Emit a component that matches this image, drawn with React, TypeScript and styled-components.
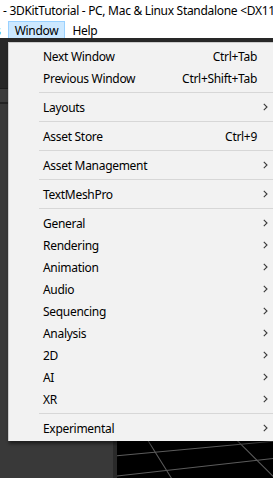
import React from 'react'
import styled, { createGlobalStyle } from 'styled-components'

const GlobalStyle = createGlobalStyle`
  html, body {
    margin: 0;
    padding: 0;
    width: 273px;
    height: 478px;
    overflow: hidden;
    background: #393939;
  }
  body {
    font-family: 'Noto Sans', 'Liberation Sans', sans-serif;
    font-size: 12px;
    letter-spacing: -0.3px;
    color: #000;
  }
`

type MenuEntry =
  | { kind: 'item'; label: string; shortcut?: string; submenu?: boolean }
  | { kind: 'separator' }

const item = (label: string, shortcut?: string): MenuEntry => ({ kind: 'item', label, shortcut })
const sub = (label: string): MenuEntry => ({ kind: 'item', label, submenu: true })
const sep: MenuEntry = { kind: 'separator' }

const WINDOW_MENU: MenuEntry[] = [
  item('Next Window', 'Ctrl+Tab'),
  item('Previous Window', 'Ctrl+Shift+Tab'),
  sep,
  sub('Layouts'),
  sep,
  item('Asset Store', 'Ctrl+9'),
  sep,
  sub('Asset Management'),
  sep,
  sub('TextMeshPro'),
  sep,
  sub('General'),
  sub('Rendering'),
  sub('Animation'),
  sub('Audio'),
  sub('Sequencing'),
  sub('Analysis'),
  sub('2D'),
  sub('AI'),
  sub('XR'),
  sep,
  sub('Experimental'),
]

// scene grid lines, in scene-view coordinates
const GRID_LINES = [
  [0, 348, 160, 333],
  [0, 368, 160, 350],
  [0, 300, 160, 288],
  [30, 332, 55, 372],
  [118, 332, 158, 372],
]

function Chevron() {
  return (
    <svg width="5" height="8" viewBox="0 0 5 8">
      <polyline points="0.8,0.8 4,4 0.8,7.2" fill="none" stroke="#3a3a3a" strokeWidth="1.1" />
    </svg>
  )
}

export default function App() {
  return (
    <>
      <GlobalStyle />
      <Page>
        <TitleBar>- 3DKitTutorial - PC, Mac &amp; Linux Standalone &lt;DX11&gt;</TitleBar>
        <MenuBar>
          <MenuBarItem $clipped>Tools</MenuBarItem>
          <MenuBarItem $open>Window</MenuBarItem>
          <MenuBarItem>Help</MenuBarItem>
        </MenuBar>
        <Workspace>
          <Toolbar />
          <TabStrip />
          <Panels>
            <HierarchyPanel />
            <Divider />
            <SceneView>
              <svg width="100%" height="100%" viewBox="0 0 156 370" preserveAspectRatio="xMinYMax slice">
                {GRID_LINES.map(([x1, y1, x2, y2], i) => (
                  <line key={i} x1={x1} y1={y1} x2={x2} y2={y2} stroke="#5c5c5c" strokeWidth="1" />
                ))}
              </svg>
            </SceneView>
          </Panels>
        </Workspace>

        <DropMenu>
          {WINDOW_MENU.map((entry, i) =>
            entry.kind === 'separator' ? (
              <Separator key={i} />
            ) : (
              <MenuRow key={i}>
                <Label>{entry.label}</Label>
                <Shortcut>{entry.shortcut}</Shortcut>
                <Arrow>{entry.submenu && <Chevron />}</Arrow>
              </MenuRow>
            ),
          )}
        </DropMenu>
      </Page>
    </>
  )
}

const Page = styled.div`
  position: relative;
  width: 273px;
  height: 478px;
  display: flex;
  flex-direction: column;
  overflow: hidden;
`

const TitleBar = styled.div`
  height: 22px;
  line-height: 22px;
  padding-left: 3px;
  background: #ffffff;
  white-space: nowrap;
  overflow: hidden;
`

const MenuBar = styled.div`
  height: 20px;
  display: flex;
  align-items: stretch;
  background: #ffffff;
  padding-top: 1px;
  box-sizing: border-box;
  white-space: nowrap;
  overflow: hidden;
`

const MenuBarItem = styled.div<{ $open?: boolean; $clipped?: boolean }>`
  display: flex;
  align-items: center;
  padding: 0 6px;
  height: 18px;
  border: 1px solid ${(p) => (p.$open ? '#99d1ff' : 'transparent')};
  background: ${(p) => (p.$open ? '#cce8ff' : 'transparent')};
  color: ${(p) => (p.$clipped ? '#2a8fd0' : '#000')};
  margin-left: ${(p) => (p.$clipped ? '-34px' : '0')};
`

const Workspace = styled.div`
  flex: 1;
  display: flex;
  flex-direction: column;
  background: #393939;
`

const Toolbar = styled.div`
  height: 50px;
  background: #282828;
  border-bottom: 1px solid #1e1e1e;
`

const TabStrip = styled.div`
  height: 13px;
  background: #3c3c3c;
  border-bottom: 2px solid #232323;
`

const Panels = styled.div`
  flex: 1;
  display: flex;
`

const HierarchyPanel = styled.div`
  width: 113px;
  background: #393939;
`

const Divider = styled.div`
  width: 4px;
  background: #2a2a2a;
`

const SceneView = styled.div`
  flex: 1;
  background: #000000;
  overflow: hidden;
`

const DropMenu = styled.div`
  position: absolute;
  top: 42px;
  left: 8px;
  right: 0;
  padding: 2px 0;
  background: #f2f2f2;
  border: 1px solid #cccccc;
  border-right: none;
  border-bottom: none;
  box-shadow: 1px 3px 3px rgba(0, 0, 0, 0.45);
`

const MenuRow = styled.div`
  height: 22px;
  display: grid;
  grid-template-columns: 34px 1fr auto 16px;
  align-items: center;
  white-space: nowrap;

  &::before {
    content: '';
  }
`

const Label = styled.span``

const Shortcut = styled.span`
  text-align: right;
`

const Arrow = styled.span`
  display: flex;
  align-items: center;
  padding-left: 6px;
`

const Separator = styled.div`
  height: 1px;
  margin: 3px 0 3px 30px;
  background: #d7d7d7;
`
